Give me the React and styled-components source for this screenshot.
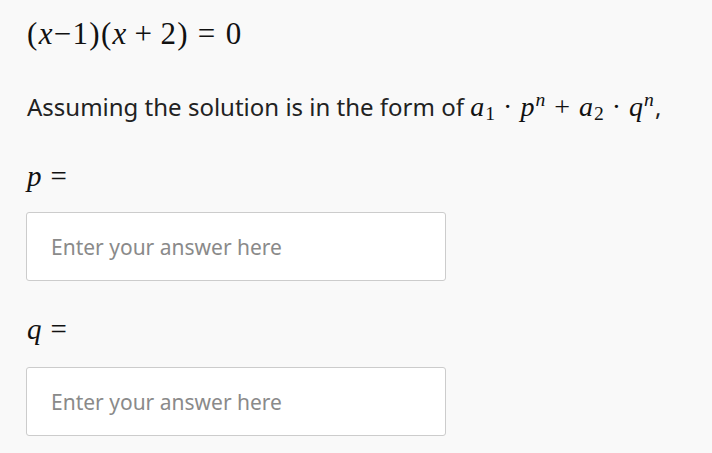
import React from "react";
import styled, { createGlobalStyle } from "styled-components";

const GlobalStyle = createGlobalStyle`
  html, body {
    margin: 0;
    padding: 0;
    background: #f9f9f9;
  }
`;

const Page = styled.div`
  width: 712px;
  height: 453px;
  box-sizing: border-box;
  padding: 14px 0 0 27px;
  background: #f9f9f9;
  color: #222;
  font-family: "Noto Sans", "Open Sans", sans-serif;
  overflow: hidden;
`;

const Math = styled.span`
  font-family: "Liberation Serif", "DejaVu Serif", serif;
  font-size: ${(p) => p.size || 24}px;
  letter-spacing: ${(p) => p.track ?? 1}px;
  color: #111;
  white-space: nowrap;
`;

const V = styled.i`
  font-style: italic;
`;

const Op = styled.span`
  margin: 0 ${(p) => p.gap ?? 7}px;
`;

const Sub = styled.sub`
  font-size: 0.7em;
  vertical-align: -0.2em;
  line-height: 0;
`;

const Sup = styled.sup`
  font-size: 0.7em;
  font-style: italic;
  vertical-align: 0.5em;
  line-height: 0;
`;

const Equation = styled.div`
  height: 40px;
  line-height: 40px;
`;

const Prompt = styled.p`
  margin: 38px 0 0 0;
  font-size: 24px;
  line-height: 30px;
`;

const Label = styled.div`
  margin-top: ${(p) => p.top}px;
  height: 30px;
  line-height: 30px;
`;

const AnswerInput = styled.input`
  display: block;
  box-sizing: border-box;
  width: 420px;
  height: 69px;
  margin: ${(p) => p.top}px 0 0 -1px;
  padding: 0 24px;
  border: 1px solid #cccccc;
  border-radius: 3px;
  background: #ffffff;
  font-family: "Noto Sans", "Open Sans", sans-serif;
  font-size: 21px;
  color: #222;
  outline: none;

  &::placeholder {
    color: #8a8a8a;
  }
`;

export default function App() {
  return (
    <>
      <GlobalStyle />
      <Page>
        <Equation>
          <Math size={31} track={1.3}>
            (<V>x</V>−1)(<V>x</V>
            <Op>+</Op>2)
            <Op gap={9}>=</Op>0
          </Math>
        </Equation>
        <Prompt>
          Assuming the solution is in the form of{" "}
          <Math size={28}>
            <V>a</V>
            <Sub>1</Sub>
            <Op gap={7}>·</Op>
            <V>p</V>
            <Sup>n</Sup>
            <Op gap={8}>+</Op>
            <V>a</V>
            <Sub>2</Sub>
            <Op gap={7}>·</Op>
            <V>q</V>
            <Sup>n</Sup>
          </Math>
          ,
        </Prompt>
        <Label top={39}>
          <Math size={29}>
            <V>p</V>
            <Op gap={8}>=</Op>
          </Math>
        </Label>
        <AnswerInput top={21} placeholder="Enter your answer here" />
        <Label top={33}>
          <Math size={29}>
            <V>q</V>
            <Op gap={8}>=</Op>
          </Math>
        </Label>
        <AnswerInput top={23} placeholder="Enter your answer here" />
      </Page>
    </>
  );
}
